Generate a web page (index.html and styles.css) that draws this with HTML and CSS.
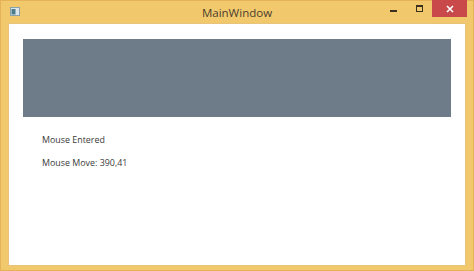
FILE: index.html
```html
<!DOCTYPE html>
<html>
<head>
<meta charset="utf-8">
<link rel="stylesheet" href="styles.css">
</head>
<body>
<div class="window">
  <div class="titlebar">
    <div class="app-icon">
      <svg width="10" height="9" viewBox="0 0 10 9">
        <rect x="0.5" y="0.5" width="9" height="8" fill="#dfe6ea" stroke="#8aa0aa"/>
        <rect x="1.5" y="2" width="4" height="5.5" fill="#4a7c8e"/>
      </svg>
    </div>
    <div class="title">MainWindow</div>
    <div class="controls">
      <div class="btn min"><span class="min-bar"></span></div>
      <div class="btn max"><span class="max-box"></span></div>
      <div class="btn close">
        <svg width="8" height="8" viewBox="0 0 8 8"><path d="M1 1L7 7M7 1L1 7" stroke="#fff" stroke-width="1.6"/></svg>
      </div>
    </div>
  </div>
  <div class="client">
    <div class="panel"></div>
    <div class="lines">
      <div class="line">Mouse Entered</div>
      <div class="line">Mouse Move: 390,41</div>
    </div>
  </div>
</div>
</body>
</html>
```
FILE: styles.css
```css
html, body {
  margin: 0;
  padding: 0;
  width: 474px;
  height: 271px;
  overflow: hidden;
}
.window {
  width: 474px;
  height: 271px;
  box-sizing: border-box;
  background: #f1c86b;
  border: 1px solid #e3b355;
  padding: 0 7px 4px 7px;
  display: flex;
  flex-direction: column;
}
.titlebar {
  height: 22px;
  display: flex;
  align-items: center;
  position: relative;
}
.app-icon {
  width: 10px;
  height: 9px;
  margin-left: 2px;
  margin-top: -2px;
  display: flex;
}
.title {
  position: absolute;
  left: 0;
  right: 0;
  top: 4px;
  text-align: center;
  font-family: "Open Sans", "Liberation Sans", sans-serif;
  font-size: 11.5px;
  color: #4a4030;
  pointer-events: none;
}
.controls {
  margin-left: auto;
  align-self: flex-start;
  display: flex;
  height: 17px;
  margin-top: -1px;
}
.btn {
  display: flex;
  align-items: center;
  justify-content: center;
  height: 17px;
}
.min { width: 26px; }
.max { width: 26px; }
.close {
  width: 35px;
  background: #c9494b;
  margin-right: -1px;
}
.min-bar {
  width: 7px;
  height: 2px;
  background: #3a3020;
  margin-top: 5px;
}
.max-box {
  width: 5px;
  height: 4px;
  border: 1px solid #3a3020;
  border-top-width: 2px;
  margin-top: -1px;
}
.client {
  flex: 1;
  background: #ffffff;
  border: 1px solid #e8c37a;
  padding: 15px 14px 0 14px;
}
.panel {
  height: 78px;
  background: #6e7c8a;
}
.lines {
  padding: 17px 0 0 19px;
  font-family: "Open Sans", "Liberation Sans", sans-serif;
  font-size: 8.9px;
  color: #3a3a3a;
}
.line {
  height: 23px;
  line-height: 12px;
}
```
